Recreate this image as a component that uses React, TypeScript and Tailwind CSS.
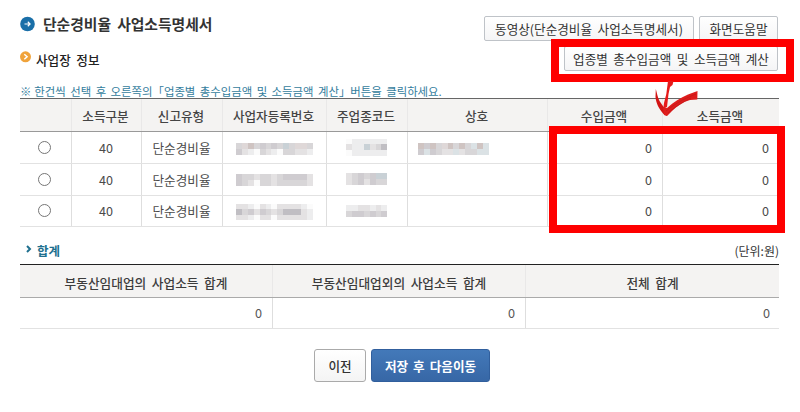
import React from 'react';

interface MosaicProps {
  rows: string[];
  heights: number[];
  className?: string;
}

const shades: Record<string, string> = {
  '.': '#fbfbfb',
  a: '#ededee',
  b: '#e4e2e3',
  c: '#d8d6d8',
  d: '#cfccd0',
  e: '#c0bec3',
  p: '#dfd8d8',
  r: '#cfc4c2',
  s: '#dbe2e5',
  t: '#c9d1d6',
};

// masked value, one letter per tile
const Mosaic: React.FC<MosaicProps> = ({ rows, heights, className = '' }) => {
  const width = rows[0].length * 5.9;
  const total = heights.reduce((sum, h) => sum + h, 0);
  let y = 0;
  return (
    <svg width={width} height={total} shapeRendering="crispEdges" className={className}>
      {rows.map((row, r) => {
        const top = y;
        y += heights[r];
        return row.split('').map((tile, c) => (
          <rect key={`${r}-${c}`} x={c * 5.9} y={top} width={5.95} height={heights[r]} fill={shades[tile]} />
        ));
      })}
    </svg>
  );
};

const records = [
  {
    bizNo: { rows: ['cprcdcdctcppc', 'dba.cba.ccbba'], heights: [6, 6] },
    code: { rows: ['.aaaaaa', 'baatbce', '.aaaaaa'], heights: [5, 6, 6] },
    name: { rows: ['rdrcprcrcsrs', 'dsdcbbsbccss'], heights: [6, 6] },
  },
  {
    bizNo: { rows: ['dccbccbcddddb', 'dcb.ccbcccccb'], heights: [6, 6] },
    code: { rows: ['bcdcdtt', 'bcdbdcc'], heights: [6, 6] },
    name: null,
  },
  {
    bizNo: { rows: ['bba.ba.bbbba.', 'ecdbdcbceeeba', 'bba.bb.bbbbba'], heights: [5, 6, 5] },
    code: { rows: ['aabbaba', 'cddcdcd'], heights: [6, 6] },
    name: null,
  },
];

const buttonBase =
  'flex items-center justify-center whitespace-nowrap rounded-[2px] border border-[#bfc3c8] bg-gradient-to-b from-white to-[#f5f5f6] pt-px text-[12.6px] text-[#333] [word-spacing:2.7px]';

const recordGrid = 'grid grid-cols-[52px_70px_81px_104px_81px_140px_115px_116px]';
const totalGrid = 'grid grid-cols-[253px_253px_253px]';
const headCell = 'flex items-center justify-center border-r border-[#e9e8e8] pt-[3px] last:border-r-0';
const bodyCell = 'flex items-center justify-center border-r border-[#dedede] pr-px pt-0.5';
const mosaicCell = 'flex items-center justify-center border-r border-[#dedede]';

const RecordTable = () => (
  <div className="w-[759px] border-t-[1.5px] border-[#666] text-[12.6px] text-[#4a4a4a]">
    <div className={`${recordGrid} h-[33px] border-b border-[#999] bg-[#f4f3f2] font-medium text-[#444]`}>
      <div className={headCell} />
      {['소득구분', '신고유형', '사업자등록번호', '주업종코드', '상호', '수입금액', '소득금액'].map(label => (
        <div key={label} className={`${headCell} pr-0.5`}>{label}</div>
      ))}
    </div>
    {records.map((record, i) => (
      <div key={i} className={`${recordGrid} border-b border-[#e2e2e2] ${i === 0 ? 'h-8' : 'h-[31.5px]'}`}>
        <div className={mosaicCell}>
          <span className="mr-0.5 size-[13px] rounded-full border border-[#767676] bg-white" />
        </div>
        <div className={bodyCell}>40</div>
        <div className={bodyCell}>단순경비율</div>
        <div className={mosaicCell}>
          <Mosaic {...record.bizNo} className="mt-0.5" />
        </div>
        <div className={mosaicCell}>
          <Mosaic {...record.code} />
        </div>
        <div className="flex items-center border-r border-[#dedede] pl-[10px]">
          {record.name && <Mosaic {...record.name} className="mt-0.5" />}
        </div>
        <div className="flex items-center justify-end border-r border-[#dedede] pr-[10px] pt-0.5">0</div>
        <div className="flex items-center justify-end pr-[10px] pt-0.5">0</div>
      </div>
    ))}
  </div>
);

const TotalTable = () => (
  <div className="w-[759px] border-t border-[#222] text-[12.7px] text-[#555]">
    <div className={`${totalGrid} h-[33px] border-b border-[#aaa] bg-[#f4f3f2] font-medium text-[#3c3c3c]`}>
      {['부동산임대업의 사업소득 합계', '부동산임대업외의 사업소득 합계', '전체 합계'].map(label => (
        <div key={label} className={headCell}>{label}</div>
      ))}
    </div>
    <div className={`${totalGrid} h-[31px] border-b border-[#e2e2e2]`}>
      {[0, 0, 0].map((value, i) => (
        <div key={i} className="flex items-center justify-end border-r border-[#dedede] pr-[10px] last:border-r-0 last:pr-[9px]">
          {value}
        </div>
      ))}
    </div>
  </div>
);

const RedArrow = () => (
  <svg className="absolute left-[650px] top-[78px]" width="52" height="42" viewBox="0 0 52 42" fill="none">
    <path d="M18 3L23.5 3L22.5 7L20 9L18.5 16L17 29L13.2 31L14 25L16.3 16Z" fill="#e61a1a" />
    <path d="M5.8 11C7 15 7.5 19 9.5 23L15 31L17 38L13.5 36C9 31 6 25 5.5 19Z" fill="#d31414" />
    <path d="M13 30L17 30C24 24 30 20 38 16.5L47.5 13L47.3 21.5L40 22C33 24 27 28 22 33L17 38L14 37Z" fill="#de1d1d" />
    <path d="M16 33C25 26 33 21 46 16M18 35C25 29 31 25 41 20" stroke="#b81818" strokeWidth="0.6" />
  </svg>
);

export default function App() {
  return (
    <div className="relative h-[412px] w-[800px] overflow-hidden bg-white font-['Noto_Sans_CJK_KR',sans-serif] text-[#333] [word-spacing:2.7px]">
      <header className="flex h-[41px] items-start justify-between pl-5 pr-[22px] pt-4">
        <h1 className="-mt-px flex items-center text-[14.8px] font-bold leading-[17px] text-[#333]">
          <svg width="16" height="16" viewBox="0 0 16 16" className="mr-[7px]">
            <circle cx="7.5" cy="8" r="7.3" fill="#1a6fa8" />
            <path d="M4.5 8h5.5M7.8 5.8l2.3 2.2-2.3 2.2" fill="none" stroke="#fff" strokeWidth="1.2" />
          </svg>
          단순경비율 사업소득명세서
        </h1>
        <div className="flex gap-[5px]">
          <button className={`${buttonBase} h-[25px] w-[210px]`}>동영상(단순경비율 사업소득명세서)</button>
          <button className={`${buttonBase} h-[25px] w-[79px]`}>화면도움말</button>
        </div>
      </header>

      <div className="flex h-[42px] items-start justify-between pl-5 pr-[22px] pt-[5px]">
        <h2 className="flex items-start pt-[5px] text-[12.6px] font-medium leading-[17px] text-[#222]">
          <svg width="11" height="12" viewBox="0 0 11 12" className="mr-[5px]">
            <circle cx="5.5" cy="5.8" r="5.5" fill="#f0a33a" />
            <path d="M4.3 3.3l2.8 2.5-2.8 2.5" fill="none" stroke="#fff" strokeWidth="1.5" />
          </svg>
          사업장 정보
        </h2>
        <button className={`${buttonBase} h-[25px] w-[214px]`}>업종별 총수입금액 및 소득금액 계산</button>
      </div>

      <main className="px-5">
        <p className="h-[15px] whitespace-nowrap text-[11.4px] leading-[16px] text-[#347d9d] [word-spacing:1.9px]">
          <span className="-mr-[1.5px]">※</span> 한건씩 선택 후 오른쪽의「업종별 총수입금액 및 소득금액 계산」버튼을 클릭하세요.
        </p>
        <RecordTable />
        <div className="flex h-[37px] w-[759px] items-end justify-between pb-1">
          <h2 className="flex items-center pl-[6px] text-[12.5px] font-bold leading-[18px] text-[#20708f]">
            <svg width="6" height="8" viewBox="0 0 6 8" className="mb-1 mr-[5px]">
              <path d="M1 1l3 3-3 3" fill="none" stroke="#20708f" strokeWidth="2" />
            </svg>
            합계
          </h2>
          <span className="text-[12px] leading-[18px]">(단위:원)</span>
        </div>
        <TotalTable />
        <div className="mt-5 flex justify-center gap-[5px] pl-1 text-[12.6px] font-bold">
          <button className="h-[33px] w-[52px] rounded-[3px] border border-[#aaa] bg-gradient-to-b from-white to-[#f4f4f4] pt-px font-medium">이전</button>
          <button className="h-[33px] w-[119px] rounded-[3px] border border-[#315f9d] bg-gradient-to-b from-[#4379b9] to-[#3767a6] pt-px text-white [word-spacing:2.2px]">저장 후 다음이동</button>
        </div>
      </main>

      {/* callouts */}
      <div className="absolute left-[551px] top-[39px] h-[43px] w-[243px] border-8 border-[#fe0000]" />
      <div className="absolute left-[549px] top-[126px] h-[107px] w-[236px] border-8 border-[#fe0000]" />
      <RedArrow />
    </div>
  );
}
